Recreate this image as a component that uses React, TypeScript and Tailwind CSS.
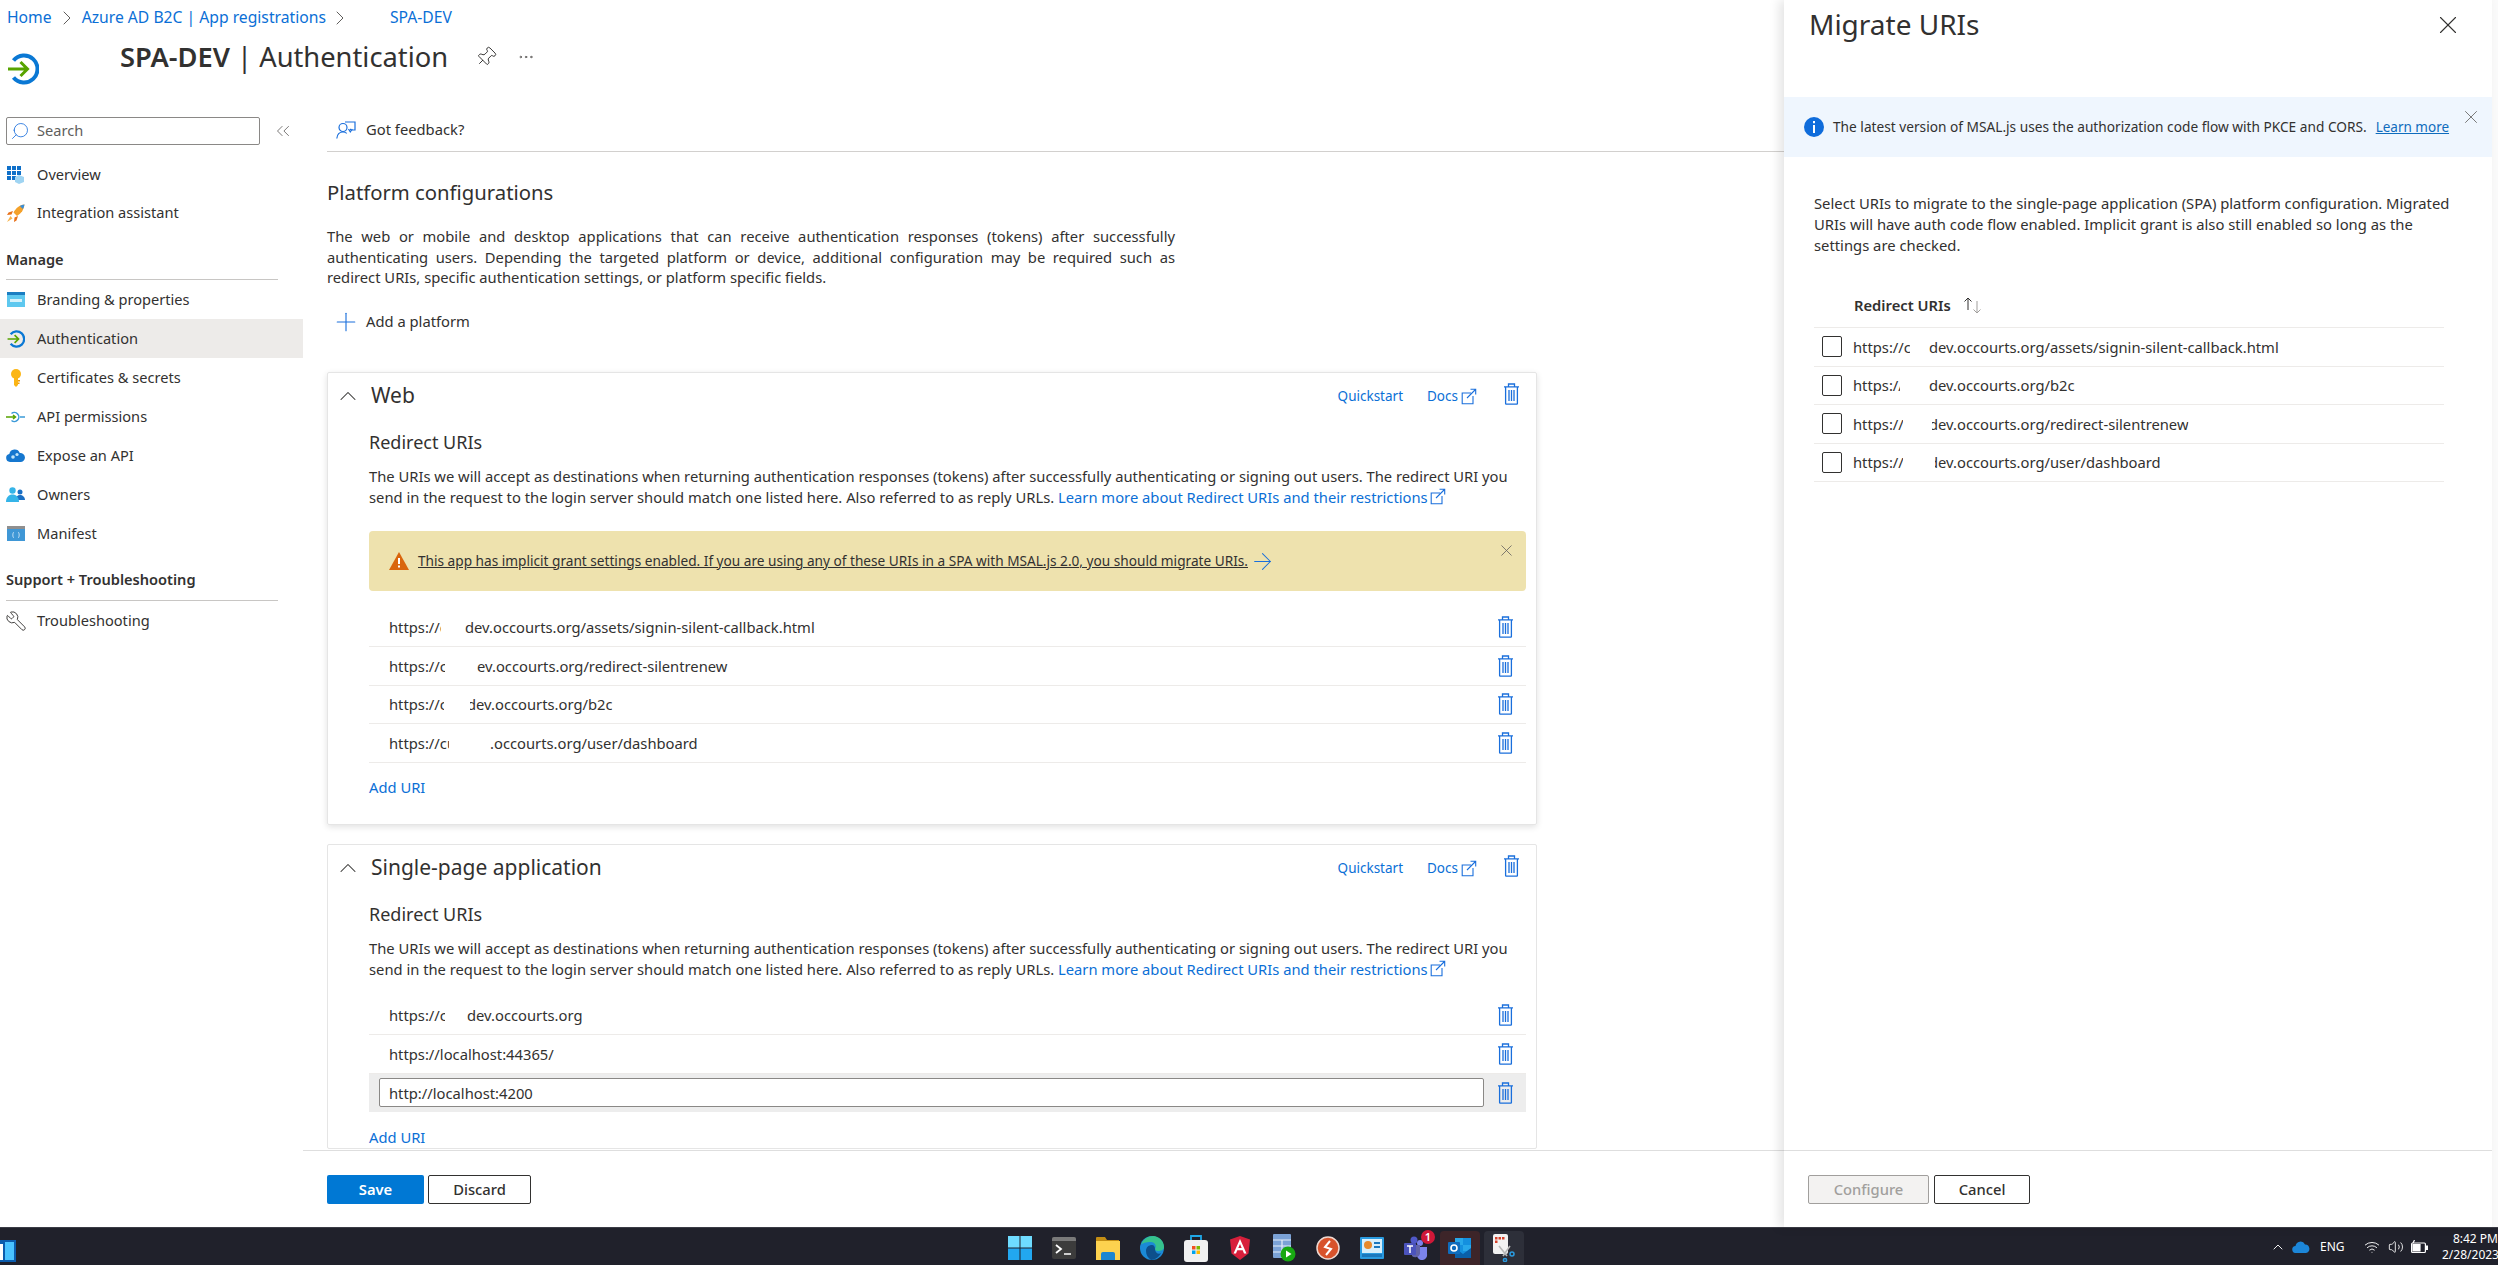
import { ChevronRight, ChevronUp, ChevronsLeft, Ellipsis, Plus, X, Pin, Search, ArrowRight, Wrench, Wifi, Volume2 } from "lucide-react";
import type { ReactNode } from "react";

const Trash = () => (
  <svg width="17" height="22" viewBox="0 0 17 22" fill="none" stroke="#1a6fdc" strokeWidth="1.3" className="shrink-0">
    <path d="M5.5 3.5V1h6v2.5M1 3.8h15M2.6 4v16.4a.8.8 0 0 0 .8.8h10.2a.8.8 0 0 0 .8-.8V4" />
    <path d="M6 7v11M8.5 7v11M11 7v11" />
  </svg>
);

const External = () => (
  <svg width="16" height="17" viewBox="0 0 16 17" fill="none" stroke="#1a6fdc" strokeWidth="1.1" className="inline-block shrink-0">
    <path d="M10 5H1.2v10.8H12V8" />
    <path d="M6 10l8.5-8.5M9.5 1.2h5.2v5.2" />
  </svg>
);

const AuthLogo = ({ size }: { size: number }) => (
  <svg width={size} height={size} viewBox="0 0 32 32" fill="none">
    <path d="M6.5 7.5A13.5 13.5 0 1 1 6.5 24.5" stroke="#0a78d4" strokeWidth="4" />
    <path d="M1 16h19M13.5 9l7 7-7 7" stroke="#57a300" strokeWidth="3" />
  </svg>
);

const OverviewIcon = () => (
  <svg width="18" height="18" viewBox="0 0 18 18">
    <path d="M0 0h4v4H0zM5 0h4v4H5zM10 0h4v4h-4zM0 5h4v4H0zM5 5h4v4H5zM10 5h4v4h-4zM0 10h4v4H0zM5 10h4v4H5z" fill="#0f70c9" />
    <path d="M12 9l5 2v5l-5 2-4-2v-5z" fill="#9fd4f2" />
  </svg>
);
const RocketIcon = () => (
  <svg width="18" height="18" viewBox="0 0 18 18">
    <path d="M17.5.5c-5 .6-8.5 3.4-11 8l3.5 3.5c4.4-2.6 7-6.400 7.500-11.500z" fill="#f4a12a" />
    <path d="M17.5.5c-1.800.2-3.300.7-4.700 1.500l3 3c.9-1.300 1.500-2.800 1.700-4.500z" fill="#3a8fd8" />
    <path d="M6 7L1.500 8.500 0 11l4.500-.5zM11 12l-1.500 4.500L7 18l.5-4.500z" fill="#e8711a" />
    <path d="M3.500 12L0 18l5.500-3.500z" fill="#f7b34b" />
  </svg>
);
const BrandingIcon = () => (
  <svg width="18" height="15" viewBox="0 0 18 15">
    <path d="M0 0h18v15H0z" fill="#5ec8ef" />
    <path d="M0 0h18v3H0z" fill="#1b7ec2" />
    <path d="M3 7h12v3H3z" fill="#d6f2fb" />
  </svg>
);
const KeyIcon = () => (
  <svg width="12" height="18" viewBox="0 0 12 18">
    <circle cx="6" cy="5" r="5" fill="#fcb614" />
    <path d="M4 8h4v8l-2 2-2-2z" fill="#fbb514" />
    <path d="M8 11h2v1.500H8zM8 13.500h1.500V15H8z" fill="#f09a0a" />
  </svg>
);
const ApiIcon = () => (
  <svg width="19" height="12" viewBox="0 0 19 12" fill="none">
    <path d="M5.500 2.500A4.500 4.500 0 1 1 5.500 9.500M14 6h5" stroke="#3b9ad8" strokeWidth="1.500" />
    <path d="M0 6h9M7 4l2.500 2L7 8" stroke="#57a300" strokeWidth="1.500" />
  </svg>
);
const CloudIcon = () => (
  <svg width="19" height="13" viewBox="0 0 19 13">
    <path d="M4 13a4 4 0 0 1-.7-7.900A5.500 5.500 0 0 1 13.800 4 4.500 4.500 0 0 1 15 13z" fill="#1577cf" />
    <circle cx="7" cy="8" r="1.800" fill="#bfe4f8" />
    <circle cx="11" cy="5.500" r="1.600" fill="#bfe4f8" />
  </svg>
);
const OwnersIcon = () => (
  <svg width="19" height="15" viewBox="0 0 19 15">
    <circle cx="14" cy="5" r="2.500" fill="#1a6fc4" />
    <path d="M9.500 13c0-3 2-5 4.500-5s5 2 5 5z" fill="#1a6fc4" />
    <circle cx="6.500" cy="3.500" r="3.200" fill="#35b4e8" />
    <path d="M0 15c0-5 3-7.500 6.500-7.500S13 10 13 15z" fill="#35b4e8" />
  </svg>
);
const ManifestIcon = () => (
  <svg width="18" height="15" viewBox="0 0 18 15">
    <path d="M0 0h18v15H0z" fill="#3f97d6" />
    <path d="M0 0h18v3H0z" fill="#8f8f8f" />
    <path d="M7 6.500c-1 0-1 .5-1 1.500s-.5 1-.5 1 .5 0 .5 1 0 1.500 1 1.500M11 6.500c1 0 1 .5 1 1.500s.5 1 .5 1-.5 0-.5 1 0 1.500-1 1.500" stroke="#e5f3fc" strokeWidth=".8" fill="none" />
  </svg>
);
const FeedbackIcon = () => (
  <svg width="20" height="20" viewBox="0 0 20 20" fill="none" stroke="#1a6fdc" strokeWidth="1.200">
    <circle cx="7" cy="7.500" r="4" />
    <path d="M.8 18.500c.4-4 2.800-6.500 6.200-6.500 1.500 0 2.800.5 3.800 1.400" />
    <path d="M9 2h10v8h-4l-1-1" />
    <path d="M12.500 9l1.800 3 2-3" />
  </svg>
);

type NavEntry = { label: string; icon: ReactNode; active?: boolean };

const NavRow = ({ label, icon, active }: NavEntry) => (
  <div className={`flex h-[39px] items-center ${active ? "bg-[#edebe9]" : ""}`}>
    <div className="flex w-[37px] shrink-0 items-center justify-center pr-[7px] pl-[1px]">{icon}</div>
    <span className="text-[14.6px] text-[#323130]">{label}</span>
  </div>
);

const SectionHead = ({ label, className }: { label: string; className: string }) => (
  <div className={`ml-[6px] flex w-[272px] items-end border-b border-[#c8c6c4] ${className}`}>
    <span className="text-[14.6px] font-semibold text-[#323130]">{label}</span>
  </div>
);

type Uri = { head: string; tail: string; cls: string; tailCls?: string };

const webUris: Uri[] = [
  { head: "https://c", tail: "dev.occourts.org/assets/signin-silent-callback.html", cls: "w-[52px] mr-[24px]" },
  { head: "https://c", tail: "ev.occourts.org/redirect-silentrenew", cls: "w-[56px] mr-[32px]" },
  { head: "https://c", tail: "dev.occourts.org/b2c", cls: "w-[55px] mr-[23px]", tailCls: "[clip-path:inset(0_0_0_3px)]" },
  { head: "https://cu", tail: ".occourts.org/user/dashboard", cls: "w-[60px] mr-[41px]" },
];

const migrateUris: Uri[] = [
  { head: "https://c", tail: "dev.occourts.org/assets/signin-silent-callback.html", cls: "w-[57px] mr-[19px]" },
  { head: "https://c", tail: "dev.occourts.org/b2c", cls: "w-[47px] mr-[29px]" },
  { head: "https://c", tail: "dev.occourts.org/redirect-silentrenew", cls: "w-[50px] mr-[26px]", tailCls: "[clip-path:inset(0_0_0_3px)]" },
  { head: "https://c", tail: "dev.occourts.org/user/dashboard", cls: "w-[50px] mr-[26px]", tailCls: "[clip-path:inset(0_0_0_6px)]" },
];

const UriText = ({ uri }: { uri: Uri }) => (
  <div className="flex whitespace-nowrap text-[14.75px] text-[#323130]">
    <span className={`inline-block overflow-hidden ${uri.cls}`}>{uri.head}</span>
    <span className={uri.tailCls}>{uri.tail}</span>
  </div>
);

const UriRow = ({ children }: { children: ReactNode }) => (
  <div className="flex h-[38.5px] items-center justify-between border-b border-[#edebe9] pr-[12px] pl-[20px]">
    {children}
    <Trash />
  </div>
);

const RedirectHelp = () => (
  <p className="mt-[12px] w-[1145px] text-[14.75px] leading-[21px] text-[#323130]">
    The URIs we will accept as destinations when returning authentication responses (tokens) after successfully
    authenticating or signing out users. The redirect URI you send in the request to the login server should match one
    listed here. Also referred to as reply URLs.{" "}
    <span className="text-[#0b6fd6]">Learn more about Redirect URIs and their restrictions</span>
    <span className="ml-[2px] inline-flex h-[14px] items-center align-[-2px]"><External /></span>
  </p>
);

const CardHeader = ({ title }: { title: string }) => (
  <div className="flex h-[44px] items-center pt-[2px] pr-[16px]">
    <ChevronUp className="ml-[6px] h-[28px] w-[28px] text-[#323130]" strokeWidth={0.9} />
    <span className="ml-[9px] text-[21px] text-[#323130]">{title}</span>
    <span className="ml-auto text-[13.5px] text-[#0b6fd6]">Quickstart</span>
    <span className="ml-[24px] text-[13.5px] text-[#0b6fd6]">Docs</span>
    <span className="ml-[3px] mr-[26px] flex"><External /></span>
    <span className="-mt-[4px] flex"><Trash /></span>
  </div>
);

const TaskIcon = ({ children, box }: { children: ReactNode; box?: string }) => (
  <div className="flex h-full w-[44px] items-end justify-center">
    <div className={`flex h-[34px] w-[40px] items-center justify-center rounded-t-[4px] ${box ?? ""}`}>{children}</div>
  </div>
);

const TaskbarIcons = () => (
  <>
    <TaskIcon>
      <svg width="24" height="24" viewBox="0 0 24 24">
        <path d="M0 0h11.500v11.500H0zM12.500 0H24v11.500H12.500z" fill="#6fdcff" />
        <path d="M0 12.500h11.500V24H0zM12.500 12.500H24V24H12.500z" fill="#22a7f0" />
      </svg>
    </TaskIcon>
    <TaskIcon>
      <svg width="24" height="22" viewBox="0 0 24 22">
        <rect width="24" height="22" rx="2" fill="#3c3c3c" />
        <path d="M0 2a2 2 0 0 1 2-2h20a2 2 0 0 1 2 2v2H0z" fill="#7a7a7a" />
        <path d="M4 8l5 4-5 4" stroke="#fff" strokeWidth="1.800" fill="none" />
        <path d="M12 17h7" stroke="#fff" strokeWidth="1.500" />
      </svg>
    </TaskIcon>
    <TaskIcon>
      <svg width="24" height="24" viewBox="0 0 24 24">
        <path d="M0 2a1 1 0 0 1 1-1h8l2 3h12v4H0z" fill="#c48e14" />
        <path d="M0 5h24v19H0z" fill="#fdd24f" />
        <path d="M5 18a2 2 0 0 1 2-2h10a2 2 0 0 1 2 2v6H5z" fill="#1c86d1" />
      </svg>
    </TaskIcon>
    <TaskIcon>
      <svg width="24" height="26" viewBox="0 0 24 24">
        <circle cx="12" cy="12" r="12" fill="#1b8ad6" />
        <path d="M1 9C3 3 8 0 13 0c6 0 11 5 11 11 0 3-3 4-6 4-2 0-3-1-3-2 2-3 0-7-4-7-5 0-9 1-10 3z" fill="#36c28c" />
        <path d="M6 15c0-4 3-6 6-6 2 0 3 2 3 4 0 4 4 6 6 4-2 4-6 7-10 7-3-2-5-5-5-9z" fill="#0d4f8b" />
      </svg>
    </TaskIcon>
    <TaskIcon>
      <svg width="24" height="28" viewBox="0 0 24 28" fill="none">
        <path d="M7 8V2h10v6" stroke="#1fa8e8" strokeWidth="1.800" />
        <rect y="6" width="24" height="22" rx="3" fill="#f1f1f1" />
        <path d="M8 12h3.500v3.500H8z" fill="#f25022" />
        <path d="M12.500 12H16v3.500h-3.500z" fill="#7fba00" />
        <path d="M8 16.500h3.500V20H8z" fill="#00a4ef" />
        <path d="M12.500 16.500H16V20h-3.500z" fill="#ffb900" />
      </svg>
    </TaskIcon>
    <TaskIcon>
      <svg width="20" height="24" viewBox="0 0 20 24">
        <path d="M10 0l10 3.500-1.500 14L10 24l-8.500-6.500L0 3.500z" fill="#d81f3b" />
        <path d="M10 3l-6.500 14.500h2.500l1.300-3.300h5.400l1.300 3.300h2.500zM8.300 12L10 8l1.700 4z" fill="#fff" />
      </svg>
    </TaskIcon>
    <TaskIcon>
      <svg width="24" height="28" viewBox="0 0 24 28">
        <rect x="1" y="0" width="18" height="24" rx="1" fill="#7ba2d6" />
        <path d="M1 6h18M1 12h18M1 18h18M10 6v18" stroke="#e6eef8" strokeWidth="1.200" />
        <circle cx="16" cy="20" r="7.500" fill="#17a811" />
        <path d="M14 16.500l5.500 3.500-5.500 3.500z" fill="#fff" />
      </svg>
    </TaskIcon>
    <TaskIcon>
      <svg width="24" height="24" viewBox="0 0 24 24" fill="none">
        <circle cx="12" cy="12" r="11" fill="#d8532c" stroke="#eed9d2" strokeWidth="1.500" />
        <path d="M14 5l-5 6 6 2-5 6" stroke="#fff" strokeWidth="2" />
      </svg>
    </TaskIcon>
    <TaskIcon>
      <svg width="24" height="22" viewBox="0 0 24 22">
        <rect width="24" height="22" rx="1" fill="#2a9be0" />
        <rect x="2" y="2" width="20" height="14" fill="#d7effb" />
        <circle cx="8" cy="8" r="4" fill="#e88a2b" />
        <path d="M14 5h6v2h-6zM14 9h6v2h-6zM2 17h20v3H2z" fill="#1a78bd" />
      </svg>
    </TaskIcon>
    <div className="relative flex h-full w-[44px] items-end justify-center">
      <div className="flex h-[34px] w-[40px] items-center justify-center">
        <svg width="26" height="24" viewBox="0 0 26 24">
          <circle cx="17" cy="7" r="3" fill="#7b83eb" />
          <path d="M13 11h11v7a5 5 0 0 1-10 2z" fill="#7b83eb" />
          <circle cx="11" cy="4" r="3.500" fill="#5059c9" />
          <path d="M9 9h8v9a5 5 0 0 1-8 2z" fill="#6264a7" />
          <rect x="1" y="7" width="12" height="12" rx="1" fill="#4b53bc" />
          <path d="M4 10h6M7 10v7" stroke="#fff" strokeWidth="1.500" />
        </svg>
      </div>
      <span className="absolute top-[2px] right-[3px] flex h-[14px] w-[14px] items-center justify-center rounded-full bg-[#cf1838] text-[11px] font-semibold text-white">1</span>
    </div>
    <TaskIcon box="bg-[#3d2529]">
      <svg width="24" height="24" viewBox="0 0 24 24">
        <path d="M7 2h16v20H7z" fill="#1490df" />
        <path d="M7 2h8v7H7zM15 9h8v6h-8z" fill="#28a8ea" />
        <path d="M7 12l8 6 8-6v10H7z" fill="#0a5fa8" />
        <rect y="6" width="12" height="12" rx="1" fill="#0f6cbd" />
        <circle cx="6" cy="12" r="3" fill="none" stroke="#fff" strokeWidth="1.600" />
      </svg>
    </TaskIcon>
    <TaskIcon box="bg-[#2d2f39]">
      <svg width="24" height="28" viewBox="0 0 24 28" fill="none">
        <rect x="1" y="0" width="15" height="20" rx="2" fill="#f2f2f2" />
        <path d="M3 3h2.500v2.500H3zM6.500 3H9v2.500H6.500zM10 3h2.500v2.500H10zM3 6.500h2.500V9H3z" fill="#d6402a" />
        <path d="M7 12l8 10M18 12l-7 10" stroke="#b9b9b9" strokeWidth="1.600" />
        <circle cx="20" cy="20" r="2" stroke="#2a9be0" strokeWidth="1.500" />
        <circle cx="13" cy="26" r="1.600" stroke="#2a9be0" strokeWidth="1.500" />
      </svg>
    </TaskIcon>
  </>
);

export default function App() {
  return (
    <div className="flex h-[1265px] w-[2498px] flex-col overflow-hidden bg-white font-['Noto_Sans',sans-serif]">
      <div className="flex h-[1227px] shrink-0">
        {/* portal */}
        <div className="flex w-[1784px] shrink-0 flex-col">
          <div className="flex h-[36px] shrink-0 items-center whitespace-nowrap pl-[7px] text-[15.7px] text-[#0b6fd6]">
            <span>Home</span>
            <ChevronRight className="mx-[3px] h-[24px] w-[24px] text-[#605e5c]" strokeWidth={1} />
            <span>Azure AD B2C | App registrations</span>
            <ChevronRight className="mx-[2px] h-[24px] w-[24px] text-[#605e5c]" strokeWidth={1} />
            <span className="ml-[36px]">SPA-DEV</span>
          </div>
          <div className="flex h-[70px] shrink-0">
            <div className="ml-[7px] mt-[17px] w-[32px]">
              <AuthLogo size={32} />
            </div>
            <div className="ml-[81px] flex h-[42px] items-center text-[#323130]">
              <span className="text-[27.3px] whitespace-nowrap">
                <span className="font-semibold">SPA-DEV</span> | Authentication
              </span>
              <Pin className="ml-[27px] h-[22px] w-[22px] rotate-45" strokeWidth={1} />
              <Ellipsis className="ml-[20px] h-[18px] w-[18px] text-[#605e5c]" strokeWidth={1.3} />
            </div>
          </div>
          <div className="flex min-h-0 flex-1">
            {/* sidebar */}
            <div className="w-[303px] shrink-0">
              <div className="mt-[11px] mb-[11px] flex h-[28px] items-center">
                <div className="ml-[6px] flex h-[28px] w-[254px] items-center rounded-[2px] border border-[#8a8886] pl-[3px]">
                  <Search className="h-[20px] w-[20px] -scale-x-100 text-[#1a6fdc]" strokeWidth={1} />
                  <span className="ml-[7px] text-[14.6px] text-[#605e5c]">Search</span>
                </div>
                <ChevronsLeft className="ml-[12px] h-[22px] w-[22px] text-[#605e5c]" strokeWidth={0.9} />
              </div>
              <div className="[&>div]:h-[38px]">
                <NavRow label="Overview" icon={<OverviewIcon />} />
                <NavRow label="Integration assistant" icon={<RocketIcon />} />
              </div>
              <SectionHead label="Manage" className="h-[48px] pb-[8px]" />
              <NavRow label="Branding & properties" icon={<BrandingIcon />} />
              <NavRow label="Authentication" icon={<AuthLogo size={18} />} active />
              <NavRow label="Certificates & secrets" icon={<KeyIcon />} />
              <NavRow label="API permissions" icon={<ApiIcon />} />
              <NavRow label="Expose an API" icon={<CloudIcon />} />
              <NavRow label="Owners" icon={<OwnersIcon />} />
              <NavRow label="Manifest" icon={<ManifestIcon />} />
              <SectionHead label="Support + Troubleshooting" className="h-[48px] pb-[9px]" />
              <NavRow label="Troubleshooting" icon={<Wrench className="h-[22px] w-[22px] shrink-0 -scale-x-100 text-[#323130]" strokeWidth={1} />} />
            </div>
            {/* content */}
            <div className="flex min-w-0 flex-1 flex-col">
              <div className="ml-[24px] flex h-[46px] shrink-0 items-center border-b border-[#d2d0ce] pt-[2px] pl-[9px]">
                <FeedbackIcon />
                <span className="ml-[10px] text-[14.75px] text-[#323130]">Got feedback?</span>
              </div>
              <div className="min-h-0 flex-1 overflow-hidden pl-[24px]">
                <h2 className="mt-[27px] h-[26px] text-[20.3px] leading-[26px] text-[#323130]">Platform configurations</h2>
                <p className="mt-[21px] w-[848px] text-justify text-[14.75px] leading-[20.5px] text-[#323130]">
                  The web or mobile and desktop applications that can receive authentication responses (tokens) after
                  successfully authenticating users. Depending the targeted platform or device, additional configuration
                  may be required such as redirect URIs, specific authentication settings, or platform specific fields.
                </p>
                <div className="mt-[22px] flex h-[24px] items-center pl-[4px]">
                  <Plus className="h-[30px] w-[30px] text-[#1a6fdc]" strokeWidth={0.9} />
                  <span className="ml-[5px] text-[14.75px] text-[#323130]">Add a platform</span>
                </div>

                <section className="mt-[38.5px] h-[453px] w-[1210px] rounded-[2px] border border-[#e5e5e5] shadow-[0_2px_6px_rgba(0,0,0,0.12)]">
                  <CardHeader title="Web" />
                  <div className="pl-[41px] pr-[10px]">
                    <h3 className="mt-[13px] h-[24px] text-[18px] leading-[24px] text-[#323130]">Redirect URIs</h3>
                    <RedirectHelp />
                    <div className="relative mt-[23px] flex h-[60px] items-center rounded-[4px] bg-[#eee2ae] pl-[20px]">
                      <svg width="20" height="18" viewBox="0 0 20 18">
                        <path d="M10 0l10 18H0z" fill="#d9650c" />
                        <path d="M9 6h2v6H9zM9 13.500h2v2H9z" fill="#fff" />
                      </svg>
                      <span className="ml-[9px] text-[13.65px] text-[#323130] underline">
                        This app has implicit grant settings enabled. If you are using any of these URIs in a SPA with MSAL.js 2.0, you should migrate URIs.
                      </span>
                      <ArrowRight className="ml-[1px] h-[27px] w-[27px] text-[#1a6fdc]" strokeWidth={0.9} />
                      <X className="absolute top-[10px] right-[10px] h-[19px] w-[19px] text-[#605e5c]" strokeWidth={1} />
                    </div>
                    <div className="mt-[17.5px]">
                      {webUris.map((u) => (
                        <UriRow key={u.tail}>
                          <UriText uri={u} />
                        </UriRow>
                      ))}
                    </div>
                    <div className="mt-[13px] h-[22px] text-[14.75px] leading-[22px] text-[#0b6fd6]">Add URI</div>
                  </div>
                </section>

                <section className="mt-[19px] w-[1210px] rounded-[2px] border border-[#e5e5e5]">
                  <CardHeader title="Single-page application" />
                  <div className="pl-[41px] pr-[10px]">
                    <h3 className="mt-[13px] h-[24px] text-[18px] leading-[24px] text-[#323130]">Redirect URIs</h3>
                    <RedirectHelp />
                    <div className="mt-[16.5px]">
                      <UriRow>
                        <UriText uri={{ head: "https://c", tail: "dev.occourts.org", cls: "w-[56px] mr-[22px]" }} />
                      </UriRow>
                      <UriRow>
                        <span className="text-[14.75px] text-[#323130]">https://localhost:44365/</span>
                      </UriRow>
                      <div className="flex h-[38px] items-center bg-[#ededed] pr-[12px] pl-[10px]">
                        <input
                          readOnly
                          value="http://localhost:4200"
                          className="h-[29px] w-[1105px] rounded-[2px] border border-[#8a8886] bg-white pl-[9px] text-[14.75px] text-[#323130]"
                        />
                        <span className="ml-auto flex"><Trash /></span>
                      </div>
                    </div>
                    <div className="mt-[14px] h-[22px] text-[14.75px] leading-[22px] text-[#0b6fd6]">Add URI</div>
                  </div>
                </section>
              </div>
              <div className="flex h-[77px] shrink-0 gap-[4px] border-t border-[#dedede] pt-[24px] pl-[24px]">
                <button className="h-[29px] w-[97px] rounded-[2px] bg-[#0078d4] text-[14.75px] font-semibold text-white">Save</button>
                <button className="h-[29px] w-[103px] rounded-[2px] border border-[#323130] text-[14.75px] font-medium text-[#323130]">Discard</button>
              </div>
            </div>
          </div>
        </div>

        {/* blade */}
        <aside className="relative z-10 flex w-[708px] shrink-0 flex-col bg-white shadow-[-5px_0_10px_rgba(0,0,0,0.1)]">
          <div className="flex h-[97px] shrink-0 items-start justify-between pt-[5px] pr-[29px] pl-[25px]">
            <h1 className="text-[28px] leading-[38px] text-[#323130]">Migrate URIs</h1>
            <X className="mt-[5px] h-[30px] w-[30px] text-[#323130]" strokeWidth={0.9} />
          </div>
          <div className="relative flex h-[60px] shrink-0 items-center bg-[#eff6fe] pl-[20px]">
            <svg width="20" height="20" viewBox="0 0 20 20">
              <circle cx="10" cy="10" r="10" fill="#0f6cdb" />
              <path d="M9 8h2v8H9zM9 4h2v2.200H9z" fill="#fff" />
            </svg>
            <span className="ml-[9px] text-[13.7px] whitespace-nowrap text-[#323130]">
              The latest version of MSAL.js uses the authorization code flow with PKCE and CORS.
            </span>
            <span className="ml-[9px] text-[13.5px] text-[#0f6cbd] underline">Learn more</span>
            <X className="absolute top-[9px] right-[10px] h-[22px] w-[22px] text-[#605e5c]" strokeWidth={0.9} />
          </div>
          <p className="mt-[36px] ml-[30px] w-[646px] text-[14.8px] leading-[21px] text-[#323130]">
            Select URIs to migrate to the single-page application (SPA) platform configuration. Migrated URIs will have
            auth code flow enabled. Implicit grant is also still enabled so long as the settings are checked.
          </p>
          <div className="mt-[28px] ml-[30px] w-[630px]">
            <div className="flex h-[44px] items-center border-b border-[#edebe9] pl-[40px]">
              <span className="text-[14.75px] font-semibold text-[#323130]">Redirect URIs</span>
              <svg width="20" height="18" viewBox="0 0 20 18" fill="none" className="ml-[12px]">
                <path d="M5 13V1M1.500 4.500L5 1l3.500 3.500" stroke="#323130" strokeWidth="1" />
                <path d="M14 4v12M10.500 12.500L14 16l3.500-3.500" stroke="#a19f9d" strokeWidth="1" />
              </svg>
            </div>
            {migrateUris.map((u) => (
              <div key={u.tail} className="flex h-[38.5px] items-center border-b border-[#edebe9] pl-[8px]">
                <span className="mr-[11px] h-[21px] w-[20px] rounded-[2px] border border-[#323130]" />
                <UriText uri={u} />
              </div>
            ))}
          </div>
          <div className="mt-auto flex h-[77px] shrink-0 gap-[5px] border-t border-[#dedede] pt-[24px] pl-[24px]">
            <button className="h-[29px] w-[121px] rounded-[2px] border border-[#a19f9d] bg-[#f3f2f1] text-[14.75px] font-medium text-[#a19f9d]">Configure</button>
            <button className="h-[29px] w-[96px] rounded-[2px] border border-[#323130] text-[14.75px] font-medium text-[#323130]">Cancel</button>
          </div>
        </aside>
        <div className="flex-1 bg-[#fafafa]" />
      </div>

      {/* taskbar */}
      <div className="flex h-[38px] shrink-0 items-stretch border-t border-[#3b3c46] bg-[#20212b] text-white">
        <div className="mt-[12px] flex h-[22px] w-[16px] overflow-hidden bg-[#0b5cad]">
          <span className="mt-[4px] h-[16px] w-[3px] bg-white" />
          <span className="mt-[2px] ml-[2px] h-[18px] w-[9px] bg-[#49c2ff]" />
        </div>
        <div className="ml-[982px] flex">
          <TaskbarIcons />
        </div>
        <div className="ml-auto flex items-center">
          <ChevronUp className="h-[16px] w-[16px]" strokeWidth={1.4} />
          <svg width="18" height="12" viewBox="0 0 18 12" className="ml-[6px]">
            <path d="M4 12a3.500 3.500 0 0 1-.5-7A5 5 0 0 1 13 3.500 4.300 4.300 0 0 1 14 12z" fill="#1c86d8" />
          </svg>
          <span className="ml-[10px] w-[24px] text-[12px]">ENG</span>
          <Wifi className="ml-[20px] h-[16px] w-[16px]" strokeWidth={1.4} />
          <Volume2 className="ml-[8px] h-[16px] w-[16px]" strokeWidth={1.3} />
          <svg width="17" height="14" viewBox="0 0 17 14" fill="none" stroke="#fff" strokeWidth="1.200" className="ml-[7px]">
            <rect x=".6" y="3" width="13.800" height="9.500" rx="1" />
            <path d="M2 4.500h7v6.500H2z" fill="#fff" />
            <path d="M15 6v3.500h1.500V6z" fill="#fff" />
            <path d="M3.500 0l-1.500 3" />
          </svg>
          <div className="ml-[14px] w-[56px] text-right text-[12px] leading-[16px] whitespace-nowrap">
            <div>8:42 PM</div>
            <div>2/28/2023</div>
          </div>
        </div>
      </div>
    </div>
  );
}
